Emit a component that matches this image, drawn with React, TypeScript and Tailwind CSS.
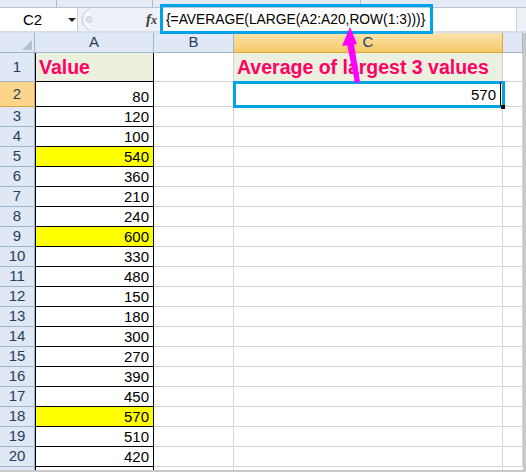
import React from 'react';

const values = [80, 120, 100, 540, 360, 210, 240, 600, 330, 480, 150, 180, 300, 270, 390, 450, 570, 510, 420];
const yellowRows = [5, 9, 18];

function rowHeight(row: number) {
  if (row === 1) return 'h-[29px]';
  if (row === 2) return 'h-[25px]';
  return 'h-[20px]';
}

export default function App() {
  return (
    <div className="relative w-[526px] h-[472px] overflow-hidden bg-white" style={{ fontFamily: '"Liberation Sans", Arial, sans-serif' }}>
      {/* Ribbon bottom strip */}
      <div className="flex h-[8px] bg-[#e4ebf4] border-b border-[#b6c6d8]">
        <div className="w-[57px] border-r border-[#a9bbd0]" />
        <div className="w-[96px] border-r border-[#a9bbd0]" />
        <div className="w-[208px] border-r border-[#a9bbd0]" />
        <div className="flex-1" />
      </div>

      {/* Formula bar */}
      <div className="flex h-[23px] bg-[#eef2f8]">
        <div className="w-[78px] bg-white flex items-center border-r border-[#c5d1de]">
          <span className="ml-[23px] text-[15px] text-black leading-none">C2</span>
          <span className="ml-[26px] w-0 h-0 border-l-[4px] border-r-[4px] border-t-[4px] border-l-transparent border-r-transparent border-t-[#222]" />
        </div>
        <div className="w-[20px] flex items-center">
          <svg width="20" height="23" viewBox="0 0 20 23">
            <path d="M12 1 A11 11 0 0 0 12 22" fill="#f4f7fb" stroke="#b8c6d6" strokeWidth="1" />
            <circle cx="11" cy="11.5" r="3" fill="#d9e1ea" stroke="#c2ccd8" strokeWidth="0.8" />
          </svg>
        </div>
        <div className="w-[62px] flex items-center justify-end pr-[3px]">
          <span className="text-[15px] italic font-bold text-[#3b3b3b] leading-none" style={{ fontFamily: '"Liberation Serif", "Times New Roman", serif' }}>
            f<span className="text-[12px]">x</span>
          </span>
        </div>
        <div className="flex-1 bg-white flex items-center pl-[6px] border-r border-[#c5d1de] mr-[9px]">
          <span className="text-[13.8px] text-black leading-none whitespace-nowrap">{'{=AVERAGE(LARGE(A2:A20,ROW(1:3)))}'}</span>
        </div>
      </div>
      <div className="h-[2px] bg-[#d5dfeb]" />

      {/* Column headers */}
      <div className="flex h-[20px] text-[15px] text-[#243f60]">
        <div className="w-[35px] bg-[#dfe8f4] border-r border-b border-[#9eb6ce] flex items-end justify-end p-[2px]">
          <svg width="10" height="10" viewBox="0 0 10 10">
            <polygon points="10,0 10,10 0,10" fill="#b3c1d1" />
          </svg>
        </div>
        <div className="w-[119px] bg-[#dfe8f4] border-r border-b border-[#9eb6ce] flex items-center justify-center">A</div>
        <div className="w-[80px] bg-[#dfe8f4] border-r border-b border-[#9eb6ce] flex items-center justify-center">B</div>
        <div className="w-[269px] bg-gradient-to-b from-[#fbe4ad] to-[#f6c865] border-r border-b border-[#d9a43f] flex items-center justify-center">C</div>
        <div className="w-[20px] bg-[#dfe8f4] border-r border-b border-[#9eb6ce]" />
        <div className="flex-1 bg-[#c9c9c9]" />
      </div>

      {/* Rows */}
      {Array.from({ length: 20 }, (_, i) => i + 1).map((row) => {
        const v = row > 1 ? values[row - 2] : null;
        const yellow = yellowRows.includes(row);
        return (
          <div key={row} className={`flex ${rowHeight(row)}`}>
            <div
              className={`w-[35px] border-b border-r flex items-center justify-center text-[15px] text-[#243f60] ${
                row === 2 ? 'bg-[#fcd48a] border-[#d9a43f]' : 'bg-[#dfe8f4] border-[#9eb6ce]'
              }`}
            >
              {row}
            </div>
            <div
              className={`w-[119px] border-l border-r border-b border-black flex items-end text-black ${
                row === 1 ? 'bg-[#ebf1de] pl-[3px] pb-[4px]' : yellow ? 'bg-[#ffff00] justify-end pr-[4px]' : 'bg-white justify-end pr-[4px]'
              }`}
            >
              {row === 1 ? (
                <span className="text-[19.5px] font-bold text-[#ff0066] leading-none">Value</span>
              ) : (
                <span className="text-[15px] leading-[18px]">{v}</span>
              )}
            </div>
            <div className="w-[80px] border-r border-b border-[#d4d4d4]" />
            <div
              className={`w-[269px] border-r border-b border-[#d4d4d4] flex items-end ${
                row === 1 ? 'bg-[#ebf1de] pl-[3px] pb-[4px]' : row === 2 ? 'justify-end pr-[6px] pb-[2px]' : ''
              }`}
            >
              {row === 1 && (
                <span className="text-[19.5px] font-bold text-[#ff0066] leading-none whitespace-nowrap">Average of largest 3 values</span>
              )}
              {row === 2 && <span className="text-[15px] leading-[18px] text-black">570</span>}
            </div>
            <div className="w-[20px] border-r border-b border-[#d4d4d4]" />
            <div className="flex-1 bg-[#c9c9c9]" />
          </div>
        );
      })}
      <div className="flex h-[3px]">
        <div className="w-[35px] bg-[#dfe8f4] border-r border-[#9eb6ce]" />
        <div className="w-[119px] border-l border-r border-black" />
        <div className="w-[80px] border-r border-[#d4d4d4]" />
        <div className="w-[269px] border-r border-[#d4d4d4]" />
        <div className="w-[20px]" />
        <div className="flex-1 bg-[#c9c9c9]" />
      </div>
      <div className="h-[4px] bg-[#c9c9c9]" />

      {/* Annotation: highlight on formula */}
      <div className="absolute left-[160px] top-[4px] w-[273px] h-[30px] border-[3px] border-[#00a2e8]" />

      {/* Selected cell C2 */}
      <div className="absolute left-[233px] top-[81px] w-[272px] h-[27px] border-[3px] border-[#00a2e8]" />
      <div className="absolute left-[500px] top-[82px] w-[1px] h-[24px] bg-black" />
      <div className="absolute left-[501px] top-[105px] w-[4px] h-[4px] bg-black" />

      {/* Arrow */}
      <svg className="absolute left-0 top-0 pointer-events-none" width="526" height="472">
        <polygon points="350,27 342,46 357,44" fill="#ff00ff" />
        <polygon points="347,44 354,44 360,82 355,83" fill="#ff00ff" />
      </svg>
    </div>
  );
}
